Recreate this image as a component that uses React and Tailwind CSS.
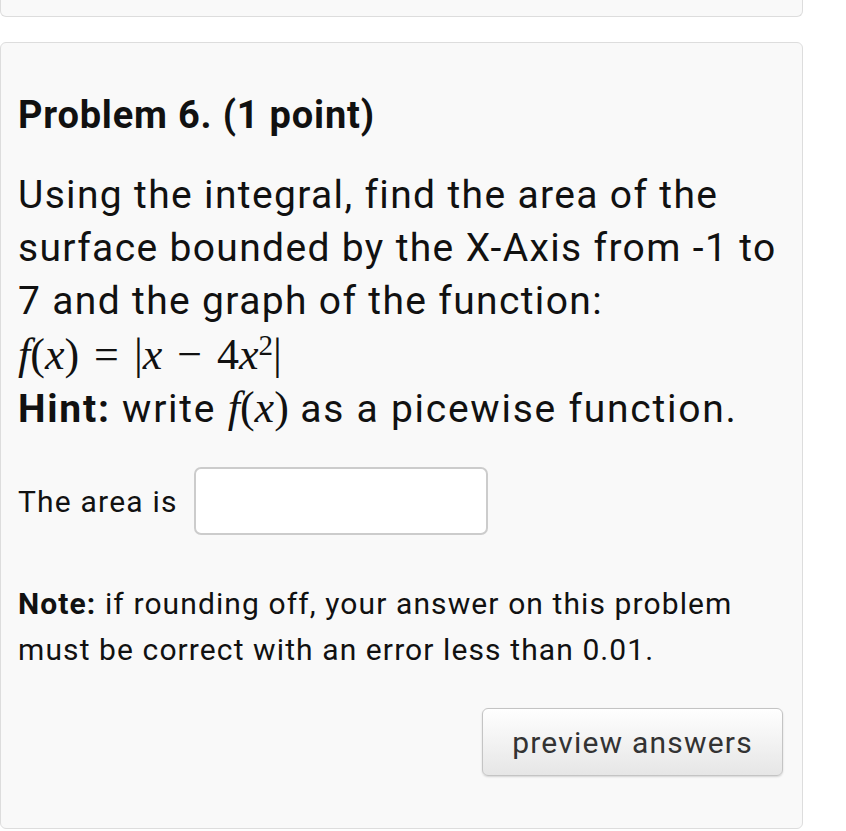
import React from "react";

const serif = { fontFamily: "'Liberation Serif', 'DejaVu Serif', serif" };

const V = ({ children }) => <i style={serif}>{children}</i>;

const App = () => {
  return (
    <div
      className="min-h-screen bg-white text-[#111111]"
      style={{ fontFamily: "Roboto, 'Noto Sans', Arial, sans-serif" }}
    >
      {/* previous problem card (cut off) */}
      <div className="w-[803px] h-[17px] border border-t-0 border-[#dddddd] bg-[#f9f9f9] rounded-b-[6px]" />

      {/* Problem card */}
      <div className="mt-[25px] w-[803px] h-[787px] border border-[#dddddd] bg-[#f9f9f9] rounded-[6px] pl-[17px] pr-[16px] pt-[50px]">
        <h3 className="font-bold text-[38px] leading-[44px] tracking-[0.8px] whitespace-nowrap">
          Problem 6. (1 point)
        </h3>

        <div className="mt-[32px] text-[39px] leading-[53px] tracking-[1.35px] whitespace-nowrap">
          <div>Using the integral, find the area of the</div>
          <div>surface bounded by the X-Axis from -1 to</div>
          <div>7 and the graph of the function:</div>
          <div className="h-[53px] text-[44px] tracking-normal" style={serif}>
            <V>f</V>(<V>x</V>)<span className="mx-[15px]">=</span>|<V>x</V>
            <span className="mx-[15px]">−</span>4<V>x</V>
            <sup className="text-[29px] leading-none">2</sup>|
          </div>
          <div className="tracking-[1.75px]">
            <b>Hint:</b> write{" "}
            <span className="text-[44px] tracking-normal" style={serif}>
              <V>f</V>(<V>x</V>)
            </span>{" "}
            as a picewise function.
          </div>
        </div>

        <div className="mt-[31px] flex items-center gap-[16px] text-[30px] tracking-[1.2px]">
          <span>The area is</span>
          <input
            type="text"
            className="w-[294px] h-[68px] bg-white border-2 border-[#cccccc] rounded-[7px] outline-none"
          />
        </div>

        <div className="mt-[46px] text-[30px] leading-[46px] tracking-[1.1px] whitespace-nowrap">
          <div>
            <b>Note:</b> if rounding off, your answer on this problem
          </div>
          <div>must be correct with an error less than 0.01.</div>
        </div>

        <div className="mt-[35px] flex justify-end pr-[3px]">
          <button className="w-[301px] h-[68px] rounded-[6px] border border-[#c4c4c4] bg-gradient-to-b from-white to-[#e6e6e6] text-[30px] tracking-[1.2px] text-[#333333] shadow-[0_1px_2px_rgba(0,0,0,0.15)]">
            preview answers
          </button>
        </div>
      </div>
    </div>
  );
};

export default App;
